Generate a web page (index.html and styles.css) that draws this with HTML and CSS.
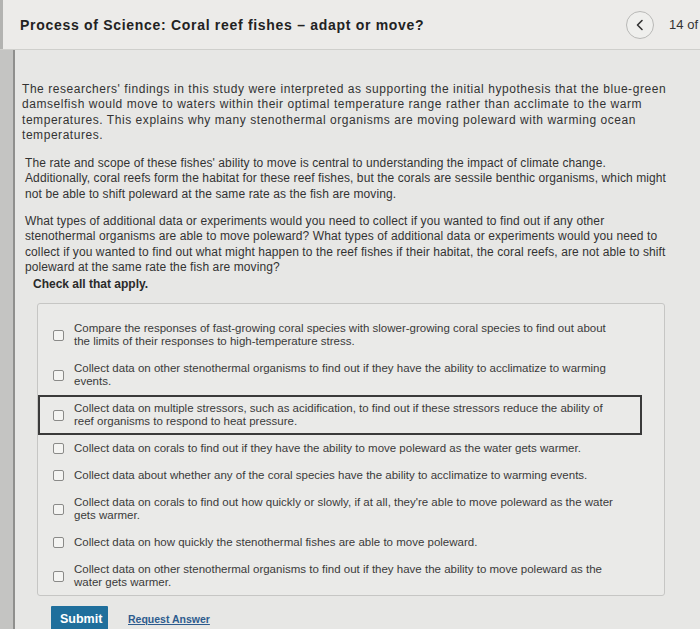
FILE: index.html
```html
<!DOCTYPE html>
<html lang="en">
<head>
<meta charset="utf-8">
<title>Process of Science: Coral reef fishes – adapt or move?</title>
<link rel="stylesheet" href="styles.css">
</head>
<body>
<div class="page">
  <header class="topbar">
    <h1 class="title">Process of Science: Coral reef fishes – adapt or move?</h1>
    <div class="nav">
      <button class="prev" aria-label="Previous">
        <svg width="10" height="12" viewBox="0 0 10 12"><path d="M7 1.5 L2.5 6 L7 10.5" fill="none" stroke="#333" stroke-width="1.6" stroke-linecap="round" stroke-linejoin="round"/></svg>
      </button>
      <span class="count">14 of</span>
    </div>
  </header>

  <main class="content">
    <p class="para p1">The researchers' findings in this study were interpreted as supporting the initial hypothesis that the blue-green damselfish would move to waters within their optimal temperature range rather than acclimate to the warm temperatures. This explains why many stenothermal organisms are moving poleward with warming ocean temperatures.</p>

    <p class="para p2">The rate and scope of these fishes' ability to move is central to understanding the impact of climate change. Additionally, coral reefs form the habitat for these reef fishes, but the corals are sessile benthic organisms, which might not be able to shift poleward at the same rate as the fish are moving.</p>

    <p class="para p3">What types of additional data or experiments would you need to collect if you wanted to find out if any other stenothermal organisms are able to move poleward? What types of additional data or experiments would you need to collect if you wanted to find out what might happen to the reef fishes if their habitat, the coral reefs, are not able to shift poleward at the same rate the fish are moving?</p>

    <p class="instr">Check all that apply.</p>

    <div class="choices">
      <label class="choice"><span class="box"></span><span class="ctext">Compare the responses of fast-growing coral species with slower-growing coral species to find out about the limits of their responses to high-temperature stress.</span></label>
      <label class="choice"><span class="box"></span><span class="ctext">Collect data on other stenothermal organisms to find out if they have the ability to acclimatize to warming events.</span></label>
      <label class="choice focused"><span class="box"></span><span class="ctext">Collect data on multiple stressors, such as acidification, to find out if these stressors reduce the ability of reef organisms to respond to heat pressure.</span></label>
      <label class="choice"><span class="box"></span><span class="ctext">Collect data on corals to find out if they have the ability to move poleward as the water gets warmer.</span></label>
      <label class="choice"><span class="box"></span><span class="ctext">Collect data about whether any of the coral species have the ability to acclimatize to warming events.</span></label>
      <label class="choice"><span class="box"></span><span class="ctext">Collect data on corals to find out how quickly or slowly, if at all, they're able to move poleward as the water gets warmer.</span></label>
      <label class="choice"><span class="box"></span><span class="ctext">Collect data on how quickly the stenothermal fishes are able to move poleward.</span></label>
      <label class="choice"><span class="box"></span><span class="ctext">Collect data on other stenothermal organisms to find out if they have the ability to move poleward as the water gets warmer.</span></label>
    </div>

    <div class="actions">
      <button class="submit">Submit</button>
      <a class="request" href="#">Request Answer</a>
    </div>
  </main>
</div>
</body>
</html>
```

FILE: styles.css
```css
* { box-sizing: border-box; }

html, body {
  margin: 0;
  padding: 0;
  background: #e7e7e5;
}

body {
  font-family: "Liberation Sans", Arial, sans-serif;
  color: #333;
}

.page {
  width: 700px;
  height: 629px;
  overflow: hidden;
  background: #e7e7e5;
}

.topbar {
  height: 50px;
  display: flex;
  align-items: center;
  justify-content: space-between;
  padding-left: 20px;
  background: #ecebe9;
  border-bottom: 1px solid #cfcfcc;
  box-shadow: inset 3px 0 0 #b3b3b1;
}

.title {
  margin: 0;
  font-size: 14px;
  font-weight: bold;
  color: #222;
  letter-spacing: 0.7px;
}

.nav {
  display: flex;
  align-items: center;
  gap: 15px;
  margin-right: 2px;
}

.prev {
  width: 28px;
  height: 28px;
  border-radius: 50%;
  border: 1.5px solid #b9b9b7;
  background: #efefed;
  display: flex;
  align-items: center;
  justify-content: center;
  padding: 0;
}

.count {
  font-size: 13px;
  color: #333;
}

.content {
  border-left: 13px solid #c4c4c2;
  box-shadow: inset 2px 0 0 #8f8f8d;
  padding: 32px 0 0 9px;
  min-height: 579px;
}

.para {
  margin: 0;
  font-size: 12px;
  line-height: 15.3px;
  color: #333;
  width: 650px;
}

.p1 {
  letter-spacing: 0.55px;
}

.p2 {
  margin-top: 13px;
  padding-left: 3px;
  letter-spacing: 0.1px;
}

.p3 {
  margin-top: 12px;
  padding-left: 3px;
  letter-spacing: 0.1px;
}

.instr {
  margin: 2px 0 0 11px;
  font-size: 12px;
  line-height: 14px;
  font-weight: bold;
  color: #2a2a2a;
}

.choices {
  margin: 12px 0 0 15px;
  width: 628px;
  height: 293px;
  border: 1px solid #c6c6c4;
  border-radius: 3px;
  background: #eaeae8;
  padding: 11px 22px 0 0;
  display: flex;
  flex-direction: column;
}

.choice {
  display: flex;
  align-items: center;
  padding: 5px 0 5px 13px;
  font-size: 11.5px;
  line-height: 13px;
  color: #3a3a3a;
  border: 2px solid transparent;
}

.choice.focused {
  border-color: #3a3a3a;
}

.box {
  flex: none;
  width: 11px;
  height: 11px;
  border: 1.5px solid #8a8a88;
  border-radius: 2px;
  background: #f4f4f2;
  margin-right: 10px;
}

.ctext {
  max-width: 550px;
}

.actions {
  display: flex;
  align-items: center;
  gap: 20px;
  margin: 10px 0 0 29px;
}

.submit {
  background: #1f6f9c;
  color: #fff;
  border: none;
  font-family: "Liberation Sans", Arial, sans-serif;
  font-weight: bold;
  font-size: 12.5px;
  padding: 0 9px;
  width: 57px;
  height: 26px;
  border-radius: 1px;
}

.request {
  font-size: 10.5px;
  font-weight: bold;
  color: #2e5c8e;
  text-decoration: underline;
}
```
